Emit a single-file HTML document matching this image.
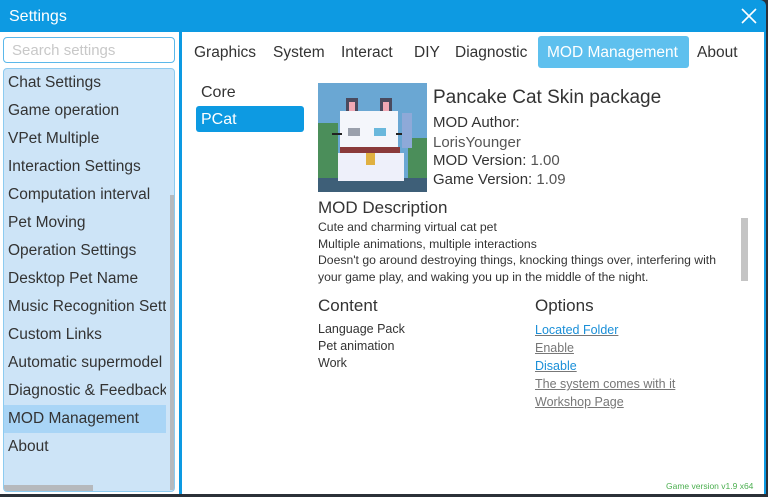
<!DOCTYPE html>
<html><head><meta charset="utf-8"><style>
*{margin:0;padding:0;box-sizing:border-box}
body{width:768px;height:497px;overflow:hidden;background:#2b3138;font-family:"Liberation Sans",sans-serif;position:relative}
.win{position:absolute;left:0;top:0;width:766px;height:494px;background:#0d9ae2;border-radius:0 6px 0 0;overflow:hidden}
.title{position:absolute;left:9px;top:8px;color:#fff;font-size:16px}
.close{position:absolute;left:740px;top:7px}
.left{position:absolute;left:0;top:32px;width:179px;height:462px;background:#fff}
.search{position:absolute;left:3px;top:37px;width:172px;height:26px;border:1.5px solid #5bb8ea;border-radius:4px;background:#fff;color:#c8c8c8;font-size:15px;padding:4px 0 0 8px}
.list{position:absolute;left:3px;top:68px;width:172px;height:424px;background:#cde4f7;border:1px solid #8ccbf0;border-radius:4px;overflow:hidden}
.list div{height:28px;font-size:15.5px;color:#333;padding:5px 0 0 4px;white-space:nowrap;width:162px;overflow:hidden}
.list .sel{background:#a9d5f6}
.vs{position:absolute;left:166px;top:126px;width:6px;height:295px;background:#b6b9bd}
.hs{position:absolute;left:0;top:416px;width:89px;height:6px;background:#b6b9bd}
.div{position:absolute;left:179px;top:32px;width:3px;height:462px;background:#0d9ae2}
.right{position:absolute;left:182px;top:32px;width:582px;height:462px;background:#fff}
.tab{position:absolute;top:12px;font-size:15.5px;color:#333}
.act{position:absolute;left:356px;top:4px;width:151px;height:32px;background:#5ec0ee;border-radius:3px;color:#fff;font-size:15.5px;padding:8px 0 0 9px}
.t{position:absolute;color:#333;white-space:nowrap}
.link{text-decoration:underline}
</style></head><body>
<div class="win">
<div class="title">Settings</div>
<svg class="close" width="18" height="18"><path d="M2 2L16 16M16 2L2 16" stroke="#fff" stroke-width="1.6"/></svg>
<div class="left"></div>
<div class="search">Search settings</div>
<div class="list">
<div>Chat Settings</div><div>Game operation</div><div>VPet Multiple</div><div>Interaction Settings</div><div>Computation interval</div><div>Pet Moving</div><div>Operation Settings</div><div>Desktop Pet Name</div><div>Music Recognition Settings</div><div>Custom Links</div><div>Automatic supermodel</div><div>Diagnostic &amp; Feedback</div><div class="sel">MOD Management</div><div>About</div>
<span class="vs"></span><span class="hs"></span>
</div>
<div class="div"></div>
<div class="right">
<div class="tab" style="left:12px">Graphics</div>
<div class="tab" style="left:91px">System</div>
<div class="tab" style="left:159px">Interact</div>
<div class="tab" style="left:232px">DIY</div>
<div class="tab" style="left:273px">Diagnostic</div>
<div class="act">MOD Management</div>
<div class="tab" style="left:515px">About</div>
<div class="t" style="left:19px;top:52px;font-size:16px">Core</div>
<div style="position:absolute;left:14px;top:74px;width:108px;height:26px;background:#0d9ae2;border-radius:3px;color:#fff;font-size:16px;padding:5px 0 0 5px">PCat</div>
<svg style="position:absolute;left:136px;top:51px" width="109" height="109" viewBox="0 0 109 109">
<rect width="109" height="109" fill="#6aa7d3"/>
<rect x="0" y="40" width="20" height="60" fill="#4b8e5a"/><rect x="90" y="55" width="19" height="45" fill="#4b8e5a"/>
<rect x="0" y="95" width="109" height="14" fill="#3e5f78"/>
<rect x="28" y="15" width="12" height="18" fill="#4a4a5e"/><rect x="62" y="15" width="12" height="18" fill="#4a4a5e"/>
<rect x="31" y="19" width="6" height="10" fill="#f0a8b4"/><rect x="65" y="19" width="6" height="10" fill="#f0a8b4"/>
<rect x="22" y="28" width="58" height="38" fill="#f4f6fb"/>
<rect x="30" y="45" width="12" height="8" fill="#9aa0ac"/><rect x="56" y="45" width="12" height="8" fill="#6ab8dc"/>
<rect x="14" y="50" width="10" height="2" fill="#222"/><rect x="78" y="50" width="10" height="2" fill="#222"/>
<rect x="84" y="30" width="10" height="35" fill="#8ea9d8"/>
<rect x="22" y="64" width="60" height="6" fill="#8a3a3a"/>
<rect x="20" y="70" width="66" height="28" fill="#eef0fa"/>
<rect x="48" y="70" width="9" height="12" fill="#e0b040"/>
</svg>
<div class="t" style="left:251px;top:55px;font-size:19px">Pancake Cat Skin package</div>
<div class="t" style="left:251px;top:82px;font-size:15px">MOD Author:</div>
<div class="t" style="left:251px;top:102px;font-size:15px;color:#555">LorisYounger</div>
<div class="t" style="left:251px;top:120px;font-size:15px">MOD Version: <span style="color:#555">1.00</span></div>
<div class="t" style="left:251px;top:139px;font-size:15px">Game Version: <span style="color:#555">1.09</span></div>
<div class="t" style="left:136px;top:166px;font-size:17px">MOD Description</div>
<div class="t" style="left:136px;top:187px;font-size:12.2px;line-height:16.5px;width:418px;height:66px;overflow:hidden;white-space:normal">Cute and charming virtual cat pet<br>Multiple animations, multiple interactions<br>Doesn't go around destroying things, knocking things over, interfering with your game play, and waking you up in the middle of the night.<br>You deserve it</div>
<div style="position:absolute;left:559px;top:186px;width:7px;height:63px;background:#c4c4c4"></div>
<div class="t" style="left:136px;top:264px;font-size:17px">Content</div>
<div class="t" style="left:136px;top:289px;font-size:12.5px;line-height:17px">Language Pack<br>Pet animation<br>Work</div>
<div class="t" style="left:353px;top:264px;font-size:17px">Options</div>
<div class="t link" style="left:353px;top:289px;font-size:12.5px;line-height:18px;color:#777"><span style="color:#1a8fd8">Located Folder</span><br>Enable<br><span style="color:#1a8fd8">Disable</span><br>The system comes with it<br>Workshop Page</div>
<div class="t" style="left:484px;top:449px;font-size:8.5px;color:#4caf50">Game version v1.9 x64</div>
</div>
</div>
</body></html>
